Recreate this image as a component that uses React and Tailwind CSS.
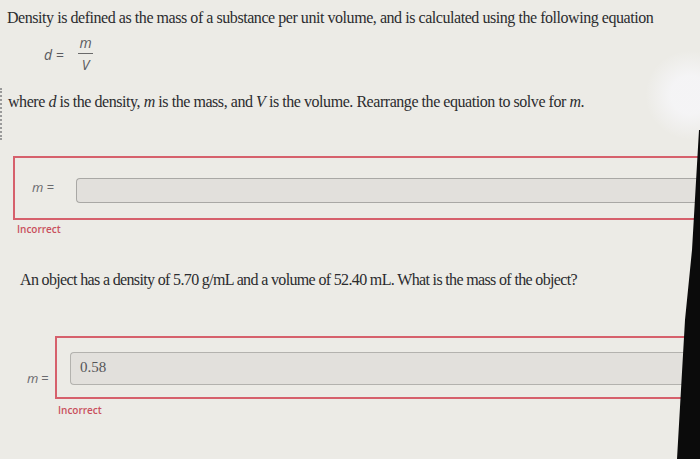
/**
 * Density question - rearrange equation, then compute mass
 */

function MathVar({ children }) {
  return <span className="italic">{children}</span>
}

function Incorrect({ className }) {
  return (
    <p className={`font-['Open_Sans',sans-serif] text-[10px] font-semibold text-[#c9505d] ${className}`}>
      Incorrect
    </p>
  )
}

export default function App() {
  return (
    <div className="relative w-[700px] h-[459px] overflow-hidden bg-[#ecebe6] font-['Liberation_Serif',serif] text-[#2b2b2e]">
      {/* Left edge of the screen */}
      <div className="absolute left-0 top-[88px] h-[52px] w-[2px] border-l-2 border-dotted border-[#9a9a9a]" />

      <p className="pl-[7px] pt-[8px] text-[16px] leading-[20px] tracking-[-0.45px]">
        Density is defined as the mass of a substance per unit volume, and is calculated using the following equation
      </p>

      {/* d = m / V */}
      <div className="flex h-[44px] items-center pl-[44px] pt-[8px] font-['Open_Sans',sans-serif] text-[14px] italic text-[#5a5a5e]">
        <span>d</span>
        <span className="not-italic pl-[4px]">=</span>
        <span className="flex flex-col items-center ml-[14px]">
          <span className="leading-[20px]">m</span>
          <span className="h-px w-[15px] bg-[#6a6a6a]" />
          <span className="leading-[22px]">V</span>
        </span>
      </div>

      <p className="pl-[8px] pt-[20px] text-[16px] leading-[20px] tracking-[-0.45px]">
        where <MathVar>d</MathVar> is the density, <MathVar>m</MathVar> is the mass, and <MathVar>V</MathVar> is the volume. Rearrange the equation to solve for <MathVar>m</MathVar>.
      </p>

      {/* First answer box */}
      <div className="ml-[13px] mt-[44px] flex h-[64px] items-center border-2 border-r-0 border-[#d6606c] pl-[17px]">
        <span className="w-[44px] font-['Open_Sans',sans-serif] text-[13px] italic text-[#6a6a6e]">
          m <span className="not-italic">=</span>
        </span>
        <div className="mt-[4px] h-[25px] flex-1 rounded-l-[4px] border border-r-0 border-[#a9a8a5] bg-[#e2e0dc]" />
      </div>
      <Incorrect className="pl-[17px] pt-[2px]" />

      <p className="pl-[20px] pt-[33px] text-[16px] leading-[20px] tracking-[-0.65px]">
        An object has a density of 5.70 g/mL and a volume of 52.40 mL. What is the mass of the object?
      </p>

      {/* Second answer box */}
      <div className="mt-[46px] flex items-center pl-[27px]">
        <span className="w-[28px] pt-[22px] font-['Open_Sans',sans-serif] text-[13px] italic text-[#6a6a6e]">
          m<span className="not-italic pl-[3px]">=</span>
        </span>
        <div className="flex h-[63px] flex-1 items-start border-2 border-r-0 border-[#d6606c] pl-[13px] pt-[14px]">
          <div className="flex h-[33px] flex-1 items-center rounded-l-[4px] border border-r-0 border-[#b3b2ae] bg-[#e2e0dc] pl-[9px] pb-[3px] font-['Liberation_Serif',serif] text-[15px] text-[#555558]">
            0.58
          </div>
        </div>
      </div>
      <Incorrect className="pl-[58px] pt-[4px]" />

      {/* Glare and bezel edge from the photo */}
      <div className="absolute right-[-35px] top-[50px] h-[90px] w-[90px] rounded-full opacity-70 bg-[radial-gradient(circle,#f8f8fc_30%,rgba(236,235,230,0)_70%)]" />
      <svg className="absolute inset-0" width="700" height="459" viewBox="0 0 700 459">
        <polygon points="699,130 692,250 685,320 677,459 700,459 700,130" fill="#0b0b0b" />
      </svg>
    </div>
  )
}
